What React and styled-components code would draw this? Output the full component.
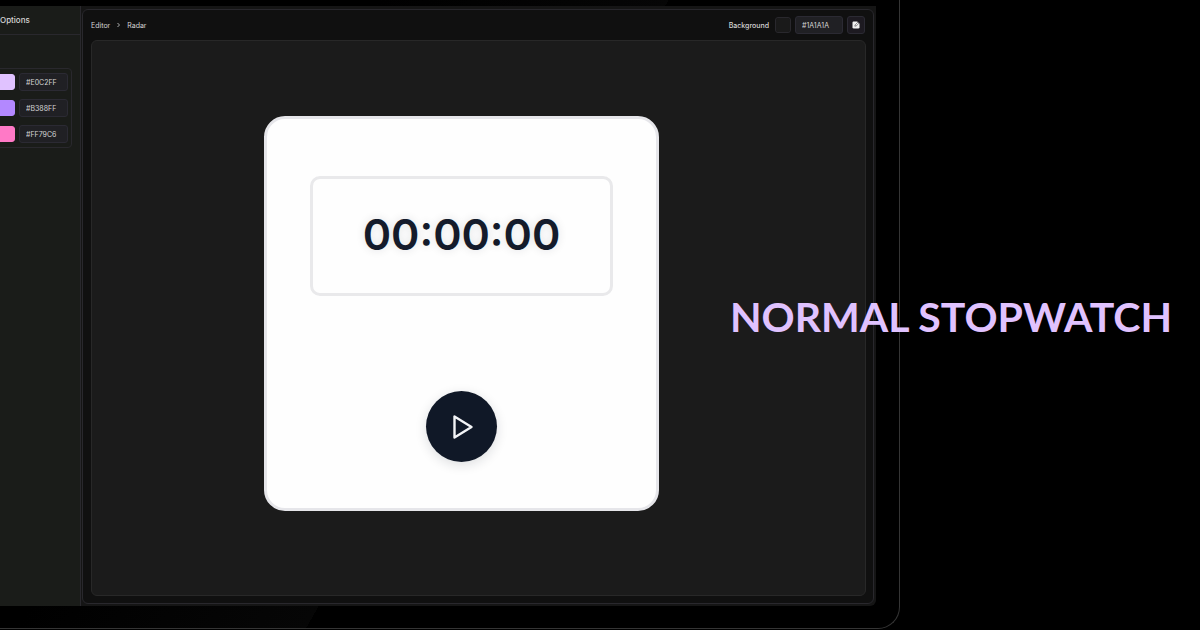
import React, { useState } from 'react';
import styled, { createGlobalStyle, ThemeProvider } from 'styled-components';

const theme = {
    font: 'Inter, "Liberation Sans", sans-serif',
    titleFont: 'Lato, "Open Sans", sans-serif',
    color: {
        page: '#000000',
        sidebar: '#1a1c19',
        panel: '#101010',
        canvas: '#1b1b1b',
        field: '#202024',
        line: '#29282d',
        text: '#d6d6d6',
        ink: '#141b2b',
        accent: '#e0c2ff',
    },
};

const GlobalStyle = createGlobalStyle`
    *, *::before, *::after {
        box-sizing: border-box;
    }
    body {
        margin: 0;
        background: #000000;
    }
`;

const Page = styled.div`
    position: relative;
    display: flex;
    min-height: 100vh;
    overflow: hidden;
    background: ${({ theme }) => theme.color.page};
    color: ${({ theme }) => theme.color.text};
    font-family: ${({ theme }) => theme.font};
`;

const Device = styled.div`
    display: flex;
    width: 75%;
    padding: 6px 23px 22px 0;
    margin-bottom: 1px;
    border: solid #353535;
    border-width: 0 1px 1px 0;
    border-radius: 0 0 22px 0;
    background: linear-gradient(120deg, #000000 30%, #060606 53%, #000000 53%);
`;

const Screen = styled.div`
    display: flex;
    flex: 1;
    overflow: hidden;
    background: #151515;
    border-radius: 0 0 6px 0;
`;

const Sidebar = styled.aside`
    width: 81px;
    flex-shrink: 0;
    border-right: 1px solid ${({ theme }) => theme.color.line};
    background: ${({ theme }) => theme.color.sidebar};
`;

const SidebarTitle = styled.h2`
    margin: 0;
    height: 29px;
    border-bottom: 1px solid ${({ theme }) => theme.color.line};
    font-size: 8px;
    font-weight: 500;
    line-height: 28px;
`;

const ColorList = styled.div`
    display: grid;
    gap: 8px;
    margin: 33px 8px 0 -8px;
    padding: 4px 3px 4px 4px;
    border: 1px solid ${({ theme }) => theme.color.line};
    border-radius: 4px;
`;

const ColorRow = styled.div`
    display: flex;
    align-items: center;
    gap: 4px;
`;

const Swatch = styled.input`
    flex-shrink: 0;
    width: ${({ $size }) => $size || 18}px;
    height: 16px;
    padding: 0;
    border: 1px solid ${({ $line, value }) => $line || value};
    border-radius: 3px;
    background: ${({ value }) => value};
    appearance: none;
    cursor: pointer;
    &::-webkit-color-swatch-wrapper {
        padding: 0;
    }
    &::-webkit-color-swatch {
        border: 0;
        border-radius: 2px;
    }
`;

const HexInput = styled.input`
    flex-grow: 1;
    width: 48px;
    height: 18px;
    padding: 0 6px;
    border: 1px solid #2b2a33;
    border-radius: 3px;
    background: ${({ theme }) => theme.color.field};
    color: ${({ theme }) => theme.color.text};
    font-family: inherit;
    font-size: 7px;
    outline: none;
`;

const Editor = styled.main`
    display: flex;
    flex: 1;
    flex-direction: column;
    margin: 3px 2px 2px 1px;
    padding: 0 7px 7px 8px;
    border: 1px solid ${({ theme }) => theme.color.line};
    border-radius: 6px;
    background: ${({ theme }) => theme.color.panel};
`;

const Toolbar = styled.header`
    display: flex;
    align-items: center;
    justify-content: space-between;
    height: 30px;
    padding-right: 1px;
`;

const Breadcrumb = styled.nav`
    display: flex;
    align-items: center;
    gap: 6px;
    font-size: 7px;
    a {
        color: inherit;
        text-decoration: none;
    }
`;

const BackgroundPicker = styled.div`
    display: flex;
    align-items: center;
    gap: 4px;
`;

const PickerLabel = styled.label`
    margin-right: 2px;
    font-size: 7px;
    font-weight: 500;
`;

const IconButton = styled.button`
    display: grid;
    place-items: center;
    width: 18px;
    height: 18px;
    padding: 0;
    border: 1px solid #2b2a33;
    border-radius: 3px;
    background: #1d1a21;
    color: #f1f1f1;
`;

const Canvas = styled.section`
    display: grid;
    flex: 1;
    place-items: center;
    padding: 0 34px 9px 0;
    border: 1px solid #282828;
    border-radius: 6px;
    background: ${({ theme }) => theme.color.canvas};
`;

const Stopwatch = styled.article`
    display: flex;
    flex-direction: column;
    align-items: center;
    justify-content: space-between;
    width: 395px;
    height: 395px;
    padding: 57px 43px 46px;
    border: 3px solid #e6e6ea;
    border-radius: 21px;
    background: #fefefe;
`;

const Display = styled.div`
    width: 100%;
    height: 120px;
    border: 3px solid #e9e9eb;
    border-radius: 10px;
    color: ${({ theme }) => theme.color.ink};
    font-size: 43px;
    font-weight: 600;
    line-height: 110px;
    text-align: center;
    text-shadow: 0 0 10px rgba(20, 27, 43, 0.12);
`;

const PlayButton = styled.button`
    display: grid;
    place-items: center;
    width: 71px;
    height: 71px;
    padding: 0;
    border: 0;
    border-radius: 50%;
    background: #101827;
    color: #f3f4f7;
    box-shadow: 0 3px 12px rgba(20, 27, 43, 0.14);
    cursor: pointer;
`;

const Title = styled.h1`
    position: absolute;
    top: 50%;
    right: 28px;
    margin: 0;
    padding-top: 4px;
    transform: translateY(-50%);
    color: ${({ theme }) => theme.color.accent};
    font-family: ${({ theme }) => theme.titleFont};
    font-size: 41px;
    font-weight: 700;
    line-height: 50px;
    white-space: nowrap;
`;

const Chevron = () => (
    <svg width="5" height="6" viewBox="0 0 5 6" fill="none" stroke="currentColor" strokeWidth="0.8" aria-hidden="true">
        <path d="M1.5 1 3.5 3 1.5 5" />
    </svg>
);

const EditIcon = () => (
    <svg width="8" height="8" viewBox="0 0 8 8" aria-hidden="true">
        <path d="M1.5 .5H5.2L7.5 2.6V6.2Q7.5 7.5 6.2 7.5H1.8Q.5 7.5 .5 6.2V1.5Q.5 .5 1.5 .5Z" fill="currentColor" />
        <path d="M2.8 5.2 3.1 3.9 5.6 1.4 6.7 2.5 4.1 5ZM6.2 .8 7.4 1.9" fill="none" stroke="#29262d" strokeWidth="0.5" />
    </svg>
);

const PlayIcon = () => (
    <svg width="24" height="26" viewBox="0 0 24 26" fill="none" stroke="currentColor" strokeWidth="2.4" strokeLinejoin="round" aria-hidden="true">
        <path d="M4.5 2.5V23.5L21.5 13Z" />
    </svg>
);

const PauseIcon = () => (
    <svg width="24" height="26" viewBox="0 0 24 26" fill="none" stroke="currentColor" strokeWidth="3" aria-hidden="true">
        <path d="M7 4V22M17 4V22" />
    </svg>
);

const initialColors = ['#E0C2FF', '#B388FF', '#FF79C6'];

export default function App() {
    const [colors, setColors] = useState(initialColors);
    const [background, setBackground] = useState('#1A1A1A');
    const [running, setRunning] = useState(false);

    const updateColor = (index, value) => {
        setColors(colors.map((color, i) => i === index ? value : color));
    };

    return (
        <ThemeProvider theme={theme}>
            <GlobalStyle />
            <Page>
                <Device>
                    <Screen>
                        <Sidebar>
                            <SidebarTitle>Options</SidebarTitle>
                            <ColorList>
                                {colors.map((color, i) => (
                                    <ColorRow key={initialColors[i]}>
                                        <Swatch type="color" value={color} aria-label={`Color ${i + 1}`} onChange={e => updateColor(i, e.target.value)} />
                                        <HexInput value={color} aria-label={`Color ${i + 1} hex`} onChange={e => updateColor(i, e.target.value)} />
                                    </ColorRow>
                                ))}
                            </ColorList>
                        </Sidebar>
                        <Editor>
                            <Toolbar>
                                <Breadcrumb>
                                    <a href="#editor">Editor</a>
                                    <Chevron />
                                    <a href="#radar">Radar</a>
                                </Breadcrumb>
                                <BackgroundPicker>
                                    <PickerLabel htmlFor="background">Background</PickerLabel>
                                    <Swatch type="color" $size={16} $line="#29282d" value={background} aria-label="Background color" onChange={e => setBackground(e.target.value)} />
                                    <HexInput id="background" value={background} onChange={e => setBackground(e.target.value)} />
                                    <IconButton aria-label="Edit"><EditIcon /></IconButton>
                                </BackgroundPicker>
                            </Toolbar>
                            <Canvas>
                                <Stopwatch>
                                    <Display>00:00:00</Display>
                                    <PlayButton aria-label={running ? 'Pause' : 'Start'} onClick={() => setRunning(!running)}>
                                        {running ? <PauseIcon /> : <PlayIcon />}
                                    </PlayButton>
                                </Stopwatch>
                            </Canvas>
                        </Editor>
                    </Screen>
                </Device>
                <Title>NORMAL STOPWATCH</Title>
            </Page>
        </ThemeProvider>
    );
}
